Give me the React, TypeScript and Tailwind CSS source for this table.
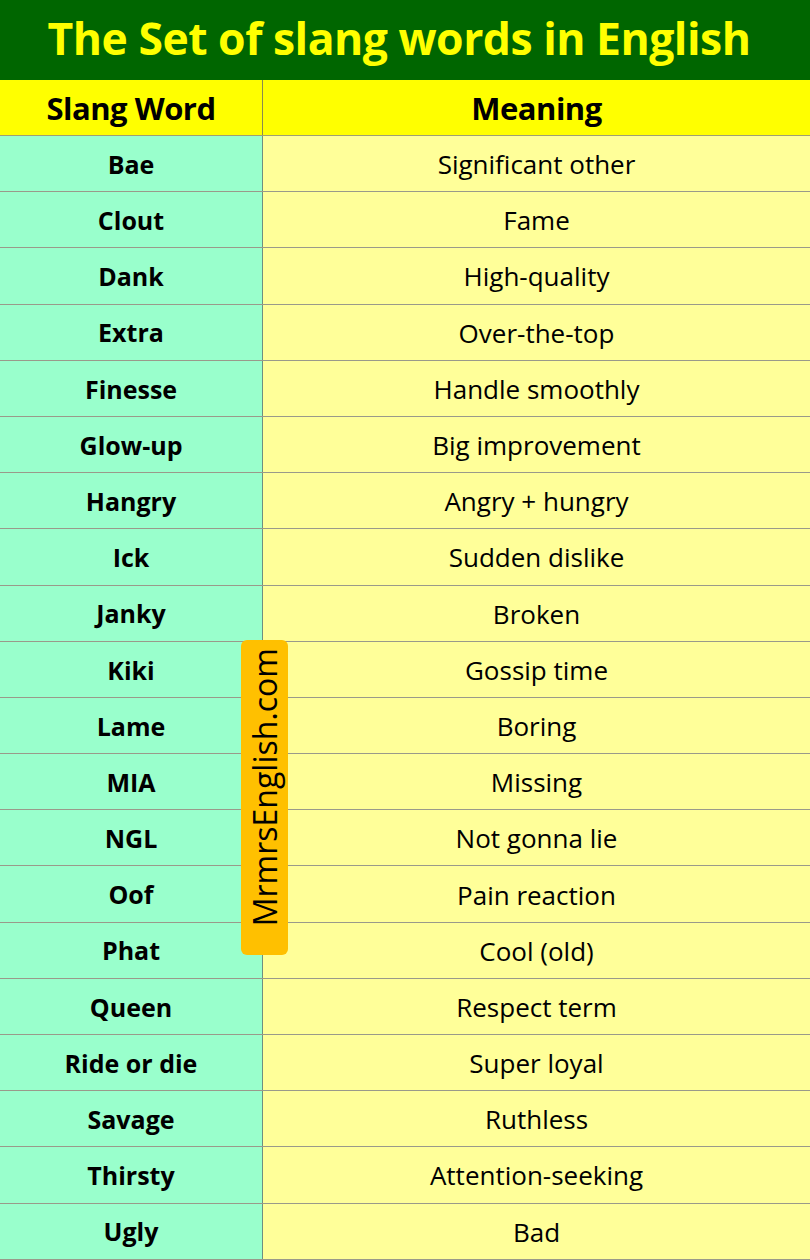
const rows: [string, string][] = [
  ["Bae", "Significant other"],
  ["Clout", "Fame"],
  ["Dank", "High-quality"],
  ["Extra", "Over-the-top"],
  ["Finesse", "Handle smoothly"],
  ["Glow-up", "Big improvement"],
  ["Hangry", "Angry + hungry"],
  ["Ick", "Sudden dislike"],
  ["Janky", "Broken"],
  ["Kiki", "Gossip time"],
  ["Lame", "Boring"],
  ["MIA", "Missing"],
  ["NGL", "Not gonna lie"],
  ["Oof", "Pain reaction"],
  ["Phat", "Cool (old)"],
  ["Queen", "Respect term"],
  ["Ride or die", "Super loyal"],
  ["Savage", "Ruthless"],
  ["Thirsty", "Attention-seeking"],
  ["Ugly", "Bad"],
];

export default function App() {
  return (
    <div className="relative w-[810px] h-[1260px] overflow-hidden bg-white font-['Open_Sans',sans-serif] text-black">
      <div className="h-[80px] bg-[#006600] flex items-center justify-center pr-3">
        <h1 className="text-[44.5px] font-bold text-[#ffff00] tracking-[-0.5px] leading-none pb-1">
          The Set of slang words in English
        </h1>
      </div>

      <div className="grid grid-cols-[263px_1fr] h-[56px] bg-[#ffff00] border-b border-[#a0a070]">
        <div className="flex items-center justify-center border-r border-[#8a8a50] text-[31px] font-bold tracking-[-0.5px] pt-0.5">
          Slang Word
        </div>
        <div className="flex items-center justify-center text-[31px] font-bold tracking-[-0.5px] pt-0.5">
          Meaning
        </div>
      </div>

      {rows.map(([word, meaning], index) => (
        <div
          key={index}
          className="grid grid-cols-[263px_1fr] h-[56.2px] border-b border-[#9a9a8a]"
        >
          <div className="flex items-center justify-center bg-[#99ffcc] border-r border-[#6f8f80] text-[25px] font-bold pt-0.5">
            {word}
          </div>
          <div className="flex items-center justify-center bg-[#ffff99] text-[26px] pt-0.5">
            {meaning}
          </div>
        </div>
      ))}

      <div className="absolute left-[241px] top-[640px] w-[47px] h-[315px] rounded-md bg-[#ffc000] flex items-center justify-center pb-5">
        <span className="[writing-mode:vertical-rl] rotate-180 text-[32px] leading-none">
          MrmrsEnglish.com
        </span>
      </div>
    </div>
  );
}
